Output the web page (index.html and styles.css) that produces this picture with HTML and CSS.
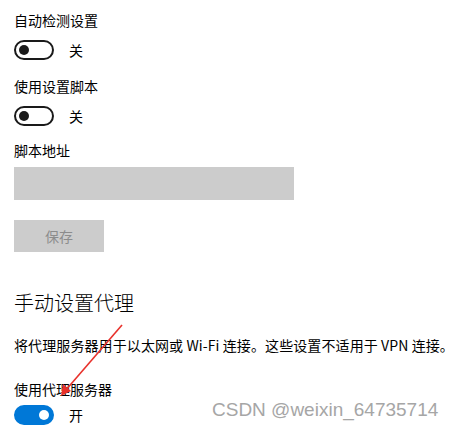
FILE: index.html
```html
<!DOCTYPE html>
<html lang="zh-CN">
<head>
    <meta charset="UTF-8">
    <meta name="viewport" content="width=device-width, initial-scale=1.0">
    <title>代理</title>
    <link rel="stylesheet" href="styles.css">
</head>
<body>
    <div class="page">
        <div class="label">自动检测设置</div>
        <div class="switch-row first">
            <span class="switch"><span class="knob"></span></span>
            <span class="state">关</span>
        </div>

        <div class="label">使用设置脚本</div>
        <div class="switch-row second">
            <span class="switch"><span class="knob"></span></span>
            <span class="state">关</span>
        </div>

        <div class="label">脚本地址</div>
        <div class="text-box"></div>
        <div class="save-btn">保存</div>

        <h2 class="section-title">手动设置代理</h2>
        <p class="desc">将代理服务器用于以太网或 Wi-Fi 连接。这些设置不适用于 VPN 连接。</p>

        <div class="label">使用代理服务器</div>
        <div class="switch-row on-row">
            <span class="switch on"><span class="knob"></span></span>
            <span class="state">开</span>
        </div>
    </div>

    <!-- annotation drawn over the screenshot -->
    <svg class="arrow" width="457" height="429" viewBox="0 0 457 429">
        <line x1="122" y1="325" x2="65" y2="391" stroke="#e8312b" stroke-width="1.6"/>
        <path d="M61 396 L63 384 L71 391 Z" fill="#e8312b"/>
    </svg>
    <div class="watermark">CSDN @weixin_64735714</div>
</body>
</html>
```

FILE: styles.css
```css
body {
    margin: 0;
    background: #fff;
    color: #000;
    font-family: "Noto Sans CJK SC", "Noto Sans", sans-serif;
    font-size: 14px;
    overflow: hidden;
}
.page {
    padding: 10px 0 0 14px;
}
.label {
    line-height: 20px;
    height: 20px;
}
.switch-row {
    display: flex;
    align-items: center;
    gap: 15px;
    margin-top: 10px;
    height: 20px;
}
.switch-row.first {
    margin-bottom: 16px;
}
.switch-row.second {
    margin-bottom: 14px;
}
.switch-row.on-row {
    margin-top: 6px;
}
.switch {
    box-sizing: border-box;
    display: flex;
    align-items: center;
    width: 40px;
    height: 20px;
    border: 2px solid #1a1a1a;
    border-radius: 10px;
    padding-left: 3px;
}
.switch .knob {
    width: 10px;
    height: 10px;
    border-radius: 50%;
    background: #1a1a1a;
}
.switch.on {
    background: #0078d7;
    border-color: #0078d7;
    justify-content: flex-end;
    padding: 0 3px 0 0;
}
.switch.on .knob {
    background: #fff;
}
.state {
    line-height: 20px;
}
.text-box {
    margin-top: 7px;
    width: 280px;
    height: 33px;
    background: #cccccc;
}
.save-btn {
    margin-top: 20px;
    width: 90px;
    height: 32px;
    line-height: 32px;
    text-align: center;
    background: #cccccc;
    color: #8c8c8c;
}
.section-title {
    margin: 37px 0 0;
    font-size: 20px;
    font-weight: 300;
    line-height: 28px;
}
.desc {
    margin: 18px 0 24px;
    line-height: 20px;
    white-space: nowrap;
    letter-spacing: 0.1px;
}
.arrow {
    position: absolute;
    left: 0;
    top: 0;
    pointer-events: none;
}
.watermark {
    position: absolute;
    left: 212px;
    top: 400px;
    font-family: "Liberation Sans", Arial, sans-serif;
    font-size: 19px;
    line-height: 19px;
    color: #a6a6a6;
    text-shadow: 0 0 1px #fff;
    white-space: nowrap;
}
```
